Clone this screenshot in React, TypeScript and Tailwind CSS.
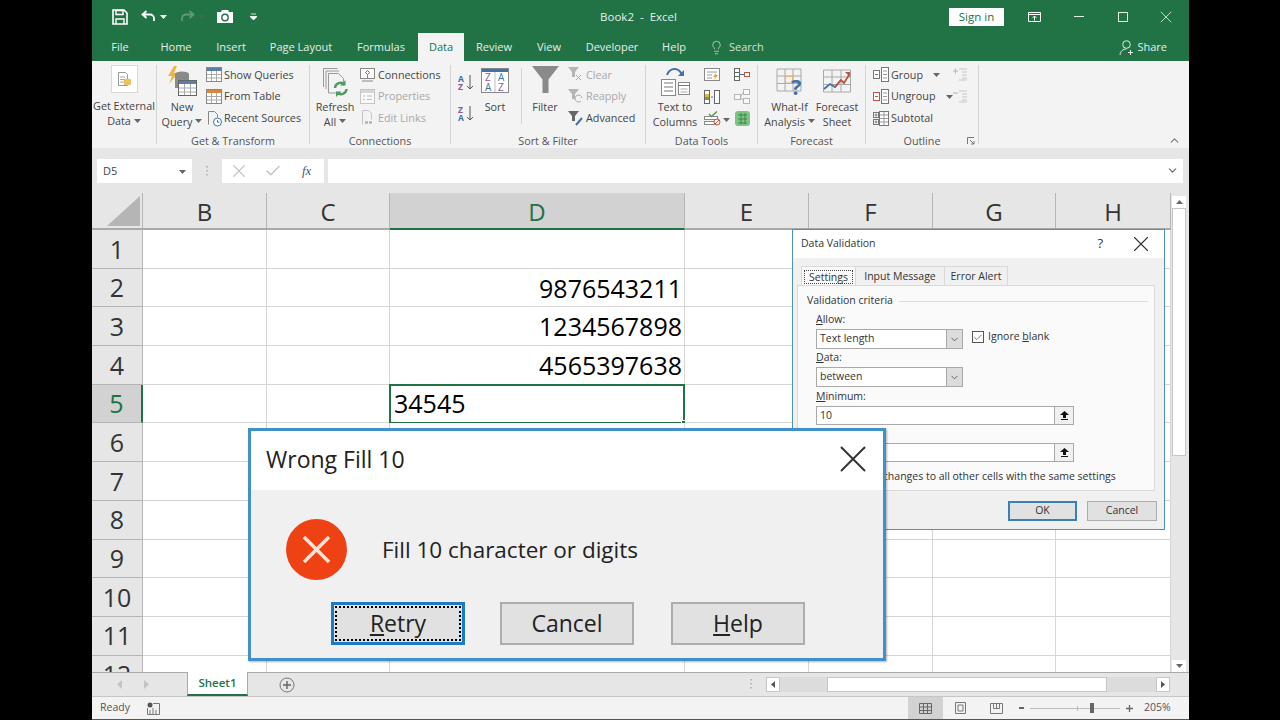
import { Lightbulb, Check, ChevronDown, ChevronUp, X } from "lucide-react";
import type { ReactNode } from "react";

const COLS = [
  { w: "w-[124px]", label: "B" },
  { w: "w-[123px]", label: "C" },
  { w: "w-[295px]", label: "D" },
  { w: "w-[124px]", label: "E" },
  { w: "w-[124px]", label: "F" },
  { w: "w-[123px]", label: "G" },
  { w: "w-[115px]", label: "H" },
];

const VALUES: Record<number, string> = { 2: "9876543211", 3: "1234567898", 4: "4565397638" };
const ROWS = [1, 2, 3, 4, 5, 6, 7, 8, 9, 10, 11, 12];

function Caret({ className = "" }: { className?: string }) {
  return (
    <svg width="7" height="4" viewBox="0 0 7 4" className={className}>
      <path d="M0 0h7L3.5 4z" fill="#666" />
    </svg>
  );
}

function GridIcon({ header = "#5b7fa6" }: { header?: string }) {
  return (
    <svg width="16" height="15" viewBox="0 0 16 15">
      <rect x=".5" y=".5" width="15" height="14" fill="#fff" stroke="#888" />
      <rect x="1" y="1" width="14" height="3" fill={header} />
      <path d="M1 7.5h14M1 11h14M5.5 4v10M10.5 4v10" stroke="#aaa" />
    </svg>
  );
}

function RecentIcon() {
  return (
    <svg width="17" height="17" viewBox="0 0 17 17">
      <path d="M2.5 14.5V1.5h6l3 3v3" fill="none" stroke="#888" />
      <circle cx="11.5" cy="12" r="4" fill="#fff" stroke="#3f72a8" />
      <path d="M11.5 10v2.2h2" fill="none" stroke="#3f72a8" />
    </svg>
  );
}

function ConnIcon() {
  return (
    <svg width="15" height="14" viewBox="0 0 15 14">
      <rect x=".5" y=".5" width="14" height="10" fill="#fff" stroke="#888" />
      <path d="M7.5 2.5l2 2-2 2-2-2z" fill="none" stroke="#3f72a8" />
      <path d="M4 10.5h7M7.5 6.5v4M2 13h11" stroke="#888" />
    </svg>
  );
}

function PropsIcon() {
  return (
    <svg width="15" height="15" viewBox="0 0 15 15" className="opacity-50">
      <rect x=".5" y=".5" width="14" height="14" fill="#fff" stroke="#999" />
      <rect x="1" y="1" width="13" height="3" fill="#bbb" />
      <path d="M3 7h2M3 10.5h2M7 7h5M7 10.5h5" stroke="#888" />
    </svg>
  );
}

function LinksIcon() {
  return (
    <svg width="15" height="16" viewBox="0 0 15 16" className="opacity-50">
      <path d="M2.5 14.5V.5h6l3 3v6" fill="none" stroke="#999" />
      <path d="M5 12.5h3M9 12.5h3" stroke="#777" strokeWidth="2.4" />
    </svg>
  );
}

function SortSmall({ top, bottom }: { top: string; bottom: string }) {
  return (
    <svg width="17" height="17" viewBox="0 0 17 17" fontSize="8.5" fontWeight="700" fontFamily="Open Sans, sans-serif">
      <text x="0" y="8" fill={top === "A" ? "#3f72a8" : "#8a5a9e"}>{top}</text>
      <text x="0" y="16" fill={bottom === "A" ? "#3f72a8" : "#8a5a9e"}>{bottom}</text>
      <path d="M12 1v14M9 12l3 3 3-3" fill="none" stroke="#555" />
    </svg>
  );
}

function SortBig() {
  return (
    <svg width="28" height="25" viewBox="0 0 28 25" fontSize="10" fontFamily="Open Sans, sans-serif" className="mb-[4px]">
      <rect x=".5" y=".5" width="27" height="24" fill="#fff" stroke="#888" />
      <rect x="1" y="1" width="26" height="3" fill="#3f72a8" />
      <path d="M14 4v20" stroke="#bbb" />
      <text x="4" y="13" fill="#8a5a9e">Z</text>
      <text x="4" y="23" fill="#3f72a8">A</text>
      <text x="17" y="13" fill="#3f72a8">A</text>
      <text x="17" y="23" fill="#8a5a9e">Z</text>
    </svg>
  );
}

function Funnel({ muted, kind }: { muted?: boolean; kind?: "x" | "r" | "p" }) {
  const fill = muted ? "#b5b5b5" : "#666";
  return (
    <svg width="16" height="15" viewBox="0 0 16 15">
      <path d="M0 0h11L7 5v5H4V5z" fill={fill} />
      {kind === "x" && <path d="M8 8l5 5M13 8l-5 5" stroke="#a8a8a8" />}
      {kind === "r" && <path d="M14 9a3.500 3.500 0 1 0-1 3" fill="none" stroke="#a8a8a8" />}
      {kind === "p" && <path d="M8 14l6-7" stroke="#3f72a8" strokeWidth="2" />}
    </svg>
  );
}

function DataIcon({ kind }: { kind: number }) {
  if (kind === 0)
    return (
      <svg width="16" height="13" viewBox="0 0 16 13">
        <rect x=".5" y=".5" width="15" height="12" fill="#fff" stroke="#888" />
        <path d="M3 4h10M3 7h5M3 10h5" stroke="#999" />
        <path d="M12 5L9 9h2l-1 3 4-5h-2z" fill="#e9a52f" />
      </svg>
    );
  if (kind === 1)
    return (
      <svg width="16" height="14" viewBox="0 0 16 14">
        <rect x=".5" y=".5" width="5" height="13" fill="#fff" stroke="#666" />
        <rect x="10.500" y=".5" width="5" height="13" fill="#fff" stroke="#666" />
        <rect x="1" y="4" width="4" height="3" fill="#e9b23a" />
        <rect x="1" y="7" width="4" height="3" fill="#6b9f5e" />
        <path d="M7 7h2" stroke="#3f72a8" />
      </svg>
    );
  if (kind === 2)
    return (
      <svg width="17" height="15" viewBox="0 0 17 15">
        <rect x=".5" y="5.500" width="13" height="3" fill="#fff" stroke="#888" />
        <rect x=".5" y="10.500" width="13" height="3" fill="#fff" stroke="#888" />
        <path d="M5 3l2.500 2.500L13 .5" fill="none" stroke="#5c9a4e" strokeWidth="1.500" />
        <circle cx="13" cy="11" r="3" fill="#fff" stroke="#c2543f" />
        <path d="M11 13l4-4" stroke="#c2543f" />
      </svg>
    );
  if (kind === 3)
    return (
      <svg width="16" height="13" viewBox="0 0 16 13">
        <rect x=".5" y=".5" width="5" height="12" fill="#fff" stroke="#666" />
        <path d="M1 4.500h4M1 8.500h4" stroke="#666" />
        <path d="M6 6.500h4" stroke="#3f72a8" />
        <rect x="10.500" y="4.500" width="5" height="4" fill="#fff" stroke="#c2543f" />
      </svg>
    );
  if (kind === 4)
    return (
      <svg width="16" height="15" viewBox="0 0 16 15" className="opacity-50">
        <rect x=".5" y="5.500" width="6" height="5" fill="#fff" stroke="#777" />
        <rect x="9.500" y=".5" width="6" height="5" fill="#fff" stroke="#777" />
        <rect x="9.500" y="9.500" width="6" height="5" fill="#fff" stroke="#777" />
        <path d="M6.500 8l3-5M6.500 8l3 4" stroke="#777" />
      </svg>
    );
  return (
    <svg width="15" height="15" viewBox="0 0 15 15">
      <rect width="15" height="15" rx="3" fill="#7cc47f" />
      <path d="M3 4h9M3 8h9M3 12h9M6 2v11M10 2v11" stroke="#2e7d45" strokeWidth=".8" />
    </svg>
  );
}

function OutlineIcon({ kind }: { kind: "group" | "ungroup" }) {
  const box = kind === "ungroup" ? "#c2543f" : "#777";
  return (
    <svg width="16" height="15" viewBox="0 0 16 15">
      <rect x=".5" y="3.500" width="6" height="8" fill="#fff" stroke={box} />
      <rect x="8.500" y=".5" width="7" height="14" fill="#fff" stroke="#777" />
      <path d="M10 4h4M10 7.500h4M10 11h4" stroke="#999" />
      <path d="M2 7.500h3" stroke={box} />
    </svg>
  );
}

function SubtotalIcon() {
  return (
    <svg width="16" height="15" viewBox="0 0 16 15">
      <rect x=".5" y="1.500" width="5" height="5" fill="#fff" stroke="#777" />
      <rect x=".5" y="8.500" width="5" height="5" fill="#fff" stroke="#777" />
      <path d="M1.500 4h3M3 2.500v3M1.500 11h3M3 9.500v3" stroke="#777" />
      <rect x="6.500" y=".5" width="9" height="14" fill="#fff" stroke="#777" />
      <path d="M7 4h8M7 7.500h8M7 11h8M11 1v13" stroke="#999" />
    </svg>
  );
}

function DetailIcon({ plus }: { plus?: boolean }) {
  return (
    <svg width="14" height="13" viewBox="0 0 14 13" className="opacity-50">
      <path d="M6 1h8M9 4h5M9 7h5M9 10h5M6 12h8" stroke="#999" />
      <path d={plus ? "M0 3h5M2.500 .5v5" : "M0 3h5"} stroke="#777" />
    </svg>
  );
}

function SmallBtn({ icon, label, muted }: { icon: ReactNode; label: ReactNode; muted?: boolean }) {
  return (
    <div className={`flex h-[21.700px] items-center ${muted ? "text-[#a8a8a8]" : ""}`}>
      <span className="flex w-[18px] shrink-0 items-center">{icon}</span>
      <span className="whitespace-nowrap">{label}</span>
    </div>
  );
}

function BigBtn({ icon, lines, caret, w }: { icon: ReactNode; lines: string[]; caret?: boolean; w: string }) {
  return (
    <div className={`flex ${w} shrink-0 flex-col items-center`}>
      <div className="flex h-[33px] items-end justify-center">{icon}</div>
      <div className="mt-[1.500px] flex flex-col items-center leading-[15px]">
        {lines.map((l, i) => (
          <span key={l} className="flex items-center gap-[3px] whitespace-nowrap">
            {l}
            {caret && i === lines.length - 1 && <Caret />}
          </span>
        ))}
      </div>
    </div>
  );
}

function Group({ w, label, children, launcher }: { w: string; label: string; children: ReactNode; launcher?: boolean }) {
  return (
    <div className={`relative my-[4px] flex ${w} shrink-0 flex-col border-r border-[#d4d4d4]`}>
      <div className="-mt-px flex h-[70px] shrink-0">{children}</div>
      <div className="shrink-0 text-center leading-[14px] text-[#555]">{label}</div>
      {launcher && (
        <svg width="8" height="8" viewBox="0 0 8 8" className="absolute bottom-[-1px] right-[3px]">
          <path d="M.5 7V.5H7M3 3l4 4M4 7h3V4" fill="none" stroke="#777" />
        </svg>
      )}
    </div>
  );
}

function TitleBar() {
  return (
    <div className="grid h-[33px] grid-cols-[1fr_auto_1fr] items-center bg-[#217346] text-[11.500px] text-[#e4efe8]">
      <div className="flex items-center pl-[20px]">
        <svg width="16" height="16" viewBox="0 0 16 16" className="mr-[13px]">
          <path d="M1 1h11l3 3v11H1z" fill="none" stroke="#fff" strokeWidth="1.600" />
          <path d="M4 1.500h7v4H4zM4 15v-5h8v5" fill="none" stroke="#fff" strokeWidth="1.400" />
        </svg>
        <svg width="15" height="13" viewBox="0 0 15 13" className="mr-[4px]">
          <path d="M5.500 1L1.500 4.500l4 3.500M2 4.500h7a4 4 0 0 1 4 4V11" fill="none" stroke="#fff" strokeWidth="1.800" />
        </svg>
        <Caret className="mr-[13px] brightness-[3]" />
        <svg width="15" height="13" viewBox="0 0 15 13" className="mr-[3px] opacity-40">
          <path d="M9.500 1l4 3.500-4 3.500M13 4.500H6a4 4 0 0 0-4 4V11" fill="none" stroke="#bcd8c8" strokeWidth="1.800" />
        </svg>
        <Caret className="mr-[12px] opacity-40" />
        <svg width="16" height="13" viewBox="0 0 16 13" className="mr-[17px]">
          <path d="M0 2h4l1-2h6l1 2h4v11H0z" fill="#fff" />
          <circle cx="8" cy="7.500" r="3.200" fill="none" stroke="#217346" strokeWidth="1.400" />
        </svg>
        <svg width="7" height="7" viewBox="0 0 7 7">
          <path d="M1 1h5M0 3.500h7L3.500 7z" stroke="#fff" fill="#fff" strokeWidth=".8" />
        </svg>
      </div>
      <div className="-translate-x-[2px]">Book2&nbsp; -&nbsp; Excel</div>
      <div className="flex items-center justify-end">
        <div className="flex h-[18px] w-[55px] items-center justify-center bg-white text-[#217346]">Sign in</div>
        <svg width="13" height="10" viewBox="0 0 13 10" className="ml-[24px]">
          <path d="M.5.500h12v9H.5zM.5 2.500h12M6.500 8.500V4M4.500 6l2-2 2 2" fill="none" stroke="#fff" />
        </svg>
        <div className="ml-[33px] h-px w-[10px] bg-[#e4efe8]" />
        <div className="ml-[34px] h-[10px] w-[10px] border border-[#e4efe8]" />
        <X size={20} strokeWidth={1} className="ml-[28px] mr-[13px] text-[#e4efe8]" />
      </div>
    </div>
  );
}

function TabBar() {
  const tabs = [
    { label: "File", w: "w-[56px]" },
    { label: "Home", w: "w-[56px]" },
    { label: "Insert", w: "w-[54px]" },
    { label: "Page Layout", w: "w-[86px]" },
    { label: "Formulas", w: "w-[74px]" },
    { label: "Data", w: "w-[46px]", active: true },
    { label: "Review", w: "w-[60px]" },
    { label: "View", w: "w-[50px]" },
    { label: "Developer", w: "w-[76px]" },
    { label: "Help", w: "w-[48px]" },
  ];
  return (
    <div className="flex h-[28px] items-stretch bg-[#217346] text-[11px] text-[#e4efe8]">
      {tabs.map((t) => (
        <div
          key={t.label}
          className={`flex ${t.w} items-center justify-center ${t.active ? "bg-[#f3f3f3] text-[#217346]" : ""}`}
        >
          {t.label}
        </div>
      ))}
      <div className="ml-[11px] flex items-center gap-[5px] text-[#cfe2d7]">
        <Lightbulb size={15} strokeWidth={1.200} />
        Search
      </div>
      <div className="ml-auto mr-[22px] flex items-center gap-[3px]">
        <svg width="15" height="15" viewBox="0 0 15 15">
          <circle cx="7.500" cy="4.500" r="3.800" fill="none" stroke="#e4efe8" />
          <path d="M1 15c.5-4 3-6 6.500-6M9 12.500h5M11.500 10v5" fill="none" stroke="#e4efe8" />
        </svg>
        Share
      </div>
    </div>
  );
}

function Ribbon() {
  return (
    <div className="relative flex h-[87px] bg-[#f3f3f3] text-[10.800px] text-[#444]">
      <Group w="w-[65px]" label="">
        <div className="flex w-full flex-col items-center">
          <div className="mt-px flex h-[28px] w-[27px] items-center justify-center border border-[#d8d8d8] bg-white">
            <svg width="15" height="15" viewBox="0 0 15 15">
              <path d="M1.500.5h7l2 2v11h-9z" fill="#fff" stroke="#999" />
              <path d="M3 5h5M3 7.500h5M3 10h4" stroke="#aaa" />
              <ellipse cx="10.500" cy="8" rx="3.500" ry="1.500" fill="#efc15c" />
              <rect x="7" y="8" width="7" height="5" fill="#efc15c" />
            </svg>
          </div>
          <div className="mt-[5px] flex flex-col items-center leading-[15px]">
            <span className="whitespace-nowrap">Get External</span>
            <span className="flex items-center gap-[3px]">
              Data <Caret />
            </span>
          </div>
        </div>
      </Group>

      <Group w="w-[153px]" label="Get & Transform">
        <BigBtn
          w="w-[50px]"
          caret
          lines={["New", "Query"]}
          icon={
            <svg width="32" height="31" viewBox="0 0 32 31">
              <path d="M8 0L2 10h4L3 18l9-11H8l3-7z" fill="#eeb544" />
              <ellipse cx="16" cy="8" rx="7" ry="2.500" fill="#8a8a8a" />
              <rect x="9" y="8" width="14" height="14" fill="#8a8a8a" />
              <rect x="12.500" y="14.500" width="18" height="15" fill="#fff" stroke="#666" />
              <rect x="13" y="15" width="17" height="3" fill="#5b7fa6" />
              <path d="M13 22h17M13 26h17M18.500 18v11M24.500 18v11" stroke="#aaa" />
            </svg>
          }
        />
        <div className="ml-[-1px] flex flex-col">
          <SmallBtn icon={<GridIcon />} label="Show Queries" />
          <SmallBtn icon={<GridIcon header="#d7893b" />} label="From Table" />
          <SmallBtn icon={<RecentIcon />} label="Recent Sources" />
        </div>
      </Group>

      <Group w="w-[141px]" label="Connections">
        <BigBtn
          w="w-[50px]"
          caret
          lines={["Refresh", "All"]}
          icon={
            <svg width="26" height="30" viewBox="0 0 26 30">
              <path d="M1.500 20V1.500h14M4 22V4h13M6.500 26V6.500h10l5 5V15M6.500 26h8" fill="none" stroke="#999" />
              <path d="M13 21a5.500 5.500 0 0 1 9.500-3.500M24.500 22a5.500 5.500 0 0 1-9.500 3.500" fill="none" stroke="#4f9a63" strokeWidth="2.400" />
              <path d="M23.500 13v5.500H18M14 30v-5.500h5.500" fill="#4f9a63" />
            </svg>
          }
        />
        <div className="flex flex-col">
          <SmallBtn icon={<ConnIcon />} label="Connections" />
          <SmallBtn muted icon={<PropsIcon />} label="Properties" />
          <SmallBtn muted icon={<LinksIcon />} label="Edit Links" />
        </div>
      </Group>

      <Group w="w-[195px]" label="Sort & Filter">
        <div className="ml-[7px] flex flex-col pt-[2px]">
          <div className="flex h-[33px] items-center">
            <SortSmall top="A" bottom="Z" />
          </div>
          <div className="flex h-[28px] items-center">
            <SortSmall top="Z" bottom="A" />
          </div>
        </div>
        <BigBtn w="w-[40px]" lines={["Sort"]} icon={<SortBig />} />
        <div className="ml-[6px] mt-[4px] h-[56px] border-l border-[#d4d4d4]" />
        <BigBtn
          w="w-[46px]"
          lines={["Filter"]}
          icon={
            <svg width="27" height="27" viewBox="0 0 27 27" className="mb-[4px]">
              <path d="M0 0h27L16.500 13.500V27h-6V13.500z" fill="#8a8a8a" />
            </svg>
          }
        />
        <div className="flex flex-col">
          <SmallBtn muted icon={<Funnel muted kind="x" />} label="Clear" />
          <SmallBtn muted icon={<Funnel muted kind="r" />} label="Reapply" />
          <SmallBtn icon={<Funnel kind="p" />} label="Advanced" />
        </div>
      </Group>

      <Group w="w-[112px]" label="Data Tools">
        <BigBtn
          w="w-[58px]"
          lines={["Text to", "Columns"]}
          icon={
            <svg width="29" height="29" viewBox="0 0 29 29" className="mb-[1px]">
              <path d="M6 8c3-8 12-8 15 0" fill="none" stroke="#3f72a8" strokeWidth="2" />
              <path d="M23 3v6h-6z" fill="#3f72a8" />
              <rect x=".5" y="12.500" width="14" height="16" fill="#fff" stroke="#888" />
              <path d="M3 16h9M3 20h9M3 24h9" stroke="#777" />
              <rect x="17.500" y="15.500" width="11" height="12" fill="#fff" stroke="#888" />
              <path d="M17 18.500h11" stroke="#777" />
              <path d="M19.500 22h7M19.500 25h7" stroke="#aaa" />
            </svg>
          }
        />
        <div className="flex w-[16px] flex-col items-center">
          <div className="flex h-[21.700px] items-center"><DataIcon kind={0} /></div>
          <div className="flex h-[21.700px] items-center"><DataIcon kind={1} /></div>
          <div className="flex h-[21.700px] items-center"><DataIcon kind={2} /></div>
        </div>
        <div className="ml-[3px] flex h-[65px] items-end pb-[7px]">
          <Caret />
        </div>
        <div className="ml-[4px] flex flex-col items-center">
          <div className="flex h-[21.700px] items-center"><DataIcon kind={3} /></div>
          <div className="flex h-[21.700px] items-center"><DataIcon kind={4} /></div>
          <div className="flex h-[21.700px] items-center"><DataIcon kind={5} /></div>
        </div>
      </Group>

      <Group w="w-[108px]" label="Forecast">
        <BigBtn
          w="w-[63px]"
          caret
          lines={["What-If", "Analysis"]}
          icon={
            <svg width="28" height="29" viewBox="0 0 28 29" className="overflow-visible">
              <path d="M1 1h24v22H1zM1 8h24M1 15.500h24M9 1v22M17 1v22" fill="none" stroke="#a8a8a8" />
              <rect x="9.500" y="8.500" width="7" height="6.500" fill="none" stroke="#e6b478" />
              <text x="15" y="27" fontSize="22" fontWeight="700" fill="#3f72a8" fontFamily="Open Sans, sans-serif">?</text>
            </svg>
          }
        />
        <BigBtn
          w="w-[32px]"
          lines={["Forecast", "Sheet"]}
          icon={
            <svg width="28" height="26" viewBox="0 0 28 26" className="mb-[2px]">
              <path d="M.5 1h27v22H.5zM.5 8h27M.5 15.500h27M9 1v22M18 1v22" fill="none" stroke="#a8a8a8" />
              <path d="M1 20l6-5 5 3 6-7" fill="none" stroke="#3f72a8" strokeWidth="1.800" />
              <path d="M12 18l6-7 3 3 5-8" fill="none" stroke="#c2543f" strokeWidth="1.800" />
              <path d="M22 3h5v5z" fill="#c2543f" />
            </svg>
          }
        />
      </Group>

      <Group w="w-[113px]" label="Outline" launcher>
        <div className="ml-[7px] flex flex-col">
          <SmallBtn icon={<OutlineIcon kind="group" />} label={<span className="flex items-center gap-[10px]">Group <Caret /></span>} />
          <SmallBtn icon={<OutlineIcon kind="ungroup" />} label={<span className="flex items-center gap-[10px]">Ungroup <Caret /></span>} />
          <SmallBtn icon={<SubtotalIcon />} label="Subtotal" />
        </div>
        <div className="ml-auto mr-[11px] flex flex-col">
          <div className="flex h-[21.700px] items-center"><DetailIcon plus /></div>
          <div className="flex h-[21.700px] items-center"><DetailIcon /></div>
        </div>
      </Group>

      <ChevronUp size={13} strokeWidth={2} className="absolute bottom-[1px] right-[8px] text-[#777]" />
    </div>
  );
}

function FormulaBar() {
  return (
    <div className="flex h-[45px] items-start bg-[#e6e6e6] pl-[5px] pr-[6px] pt-[10.500px] text-[11px] text-[#444]">
      <div className="flex h-[24px] w-[95px] items-center justify-between bg-white pl-[6px] pr-[6px] pt-[2px]">
        D5 <Caret />
      </div>
      <svg width="4" height="12" viewBox="0 0 4 12" className="ml-[13px] mt-[6px]">
        <path d="M2 1v1.500M2 5v1.500M2 9v1.500" stroke="#aaa" strokeWidth="1.500" />
      </svg>
      <div className="ml-[13px] flex h-[24px] w-[102px] items-center bg-white pl-[6px] text-[#c4c4c4]">
        <X size={22} strokeWidth={1.200} />
        <Check size={18} strokeWidth={2} className="ml-[14px]" />
        <span className="ml-[20px] font-['Liberation_Serif',serif] text-[13px] italic text-[#555]">fx</span>
      </div>
      <div className="ml-[4px] flex h-[24px] flex-1 items-center justify-end bg-white pr-[4px]">
        <ChevronDown size={13} strokeWidth={2} className="text-[#666]" />
      </div>
    </div>
  );
}

function Sheet() {
  return (
    <div className="relative flex h-[479px] bg-[#e6e6e6]">
      <div className="h-full w-[1079px] overflow-hidden">
        <div className="flex h-[37px] border-b-2 border-[#a9a9a9] text-[24px] text-[#333]">
          <div className="flex w-[51px] items-end justify-end border-r border-[#b5b5b5] pb-[2px] pr-[2px]">
            <svg width="33" height="30" viewBox="0 0 33 30">
              <path d="M33 0v30H0z" fill="#b5b5b5" />
            </svg>
          </div>
          {COLS.map((c) => (
            <div
              key={c.label}
              className={`flex ${c.w} items-center justify-center border-r border-[#b5b5b5] pt-[2px] ${
                c.label === "D" ? "-mb-[2px] border-b-2 border-b-[#217346] bg-[#d2d2d2] text-[#217346]" : ""
              }`}
            >
              {c.label}
            </div>
          ))}
        </div>
        {ROWS.map((r) => (
          <div key={r} className="flex h-[38.700px]">
            <div
              className={`flex w-[51px] shrink-0 items-center justify-center border-b border-r border-[#b5b5b5] pt-[1px] text-[25px] ${
                r === 5 ? "border-r-2 border-r-[#217346] bg-[#d2d2d2] text-[#217346]" : "text-[#333]"
              }`}
            >
              {r}
            </div>
            {COLS.map((c) => (
              <div
                key={c.label}
                className={`relative flex ${c.w} shrink-0 items-center justify-end border-b border-r border-[#d6d6d6] bg-white pr-[2px] pt-[2px] text-[25px] text-black`}
              >
                {c.label === "D" && VALUES[r]}
                {c.label === "D" && r === 5 && (
                  <div className="absolute -left-px -top-px flex h-[40px] w-[296px] items-center border-2 border-[#217346] pl-[3px]">
                    34545
                    <div className="absolute -bottom-[3px] -right-[3px] h-[5px] w-[5px] border border-white bg-[#217346]" />
                  </div>
                )}
              </div>
            ))}
          </div>
        ))}
      </div>
      <VerticalScroll />
      <DataValidation />
      <WrongFill />
    </div>
  );
}

function VerticalScroll() {
  return (
    <div className="ml-px flex h-full w-[14px] flex-col pt-[3px]">
      <div className="flex h-[12px] items-center justify-center bg-white">
        <svg width="7" height="4" viewBox="0 0 7 4"><path d="M3.500 0L7 4H0z" fill="#666" /></svg>
      </div>
      <div className="h-[248px] border border-[#c6c6c6] bg-white" />
      <div className="flex-1" />
      <div className="flex h-[12px] items-center justify-center bg-white">
        <Caret />
      </div>
    </div>
  );
}

function Dropdown({ value }: { value: string }) {
  return (
    <div className="flex h-[20px] w-[147px] items-center justify-between border border-[#a9a9a9] bg-white pl-[3px]">
      {value}
      <span className="flex h-full w-[16px] items-center justify-center border-l border-[#a9a9a9] bg-[#dcdcdc]">
        <ChevronDown size={11} className="text-[#555]" />
      </span>
    </div>
  );
}

function RefInput({ value }: { value?: string }) {
  return (
    <div className="flex h-[19px] w-[258px] items-center border border-[#a9a9a9] bg-white pl-[3px]">
      {value}
      <span className="ml-auto flex h-full w-[19px] items-center justify-center border-l border-[#a9a9a9] bg-[#f0f0f0]">
        <svg width="9" height="9" viewBox="0 0 9 9"><path d="M4.500 0L9 4H6v3H3V4H0zM1 8h7v1H1z" fill="#111" /></svg>
      </span>
    </div>
  );
}

function DataValidation() {
  return (
    <div className="absolute left-[700px] top-[36px] flex h-[301px] w-[373px] flex-col border border-[#4b91c4] bg-[#f0f0f0] text-[10.500px] text-[#333]">
      <div className="flex h-[28px] items-center justify-between bg-white pl-[8px] pr-[10px]">
        Data Validation
        <div className="flex items-center gap-[25px]">
          <span className="text-[13px]">?</span>
          <X size={26} strokeWidth={1} />
        </div>
      </div>
      <div className="ml-[8px] mt-[8px] flex h-[19px] items-stretch">
        <div className="flex w-[55px] items-center justify-center border border-b-0 border-[#d9d9d9] bg-[#fafafa] pt-[1px]">
          <span className="border border-dotted border-[#444] px-[4px] leading-[12px]">Settings</span>
        </div>
        <div className="flex w-[89px] items-center justify-center border-r border-t border-[#d9d9d9] pt-[2px]">Input Message</div>
        <div className="flex w-[63px] items-center justify-center border-r border-t border-[#d9d9d9] pt-[2px]">Error Alert</div>
      </div>
      <div className="ml-[4px] mr-[9px] flex h-[206px] flex-col border border-[#d9d9d9] bg-[#fafafa] pl-[9px] pt-[8px]">
        <div className="flex h-[14px] items-center gap-[6px] pr-[6px]">
          Validation criteria <div className="h-px flex-1 bg-[#dcdcdc]" />
        </div>
        <div className="ml-[9px] flex flex-col">
          <div className="mt-[4px] h-[14px] leading-[14px]"><u>A</u>llow:</div>
          <div className="mt-[3px] flex items-center gap-[9px]">
            <Dropdown value="Text length" />
            <div className="-mt-[4px] flex items-center gap-[4px]">
              <span className="flex h-[12px] w-[12px] items-center justify-center border border-[#555] bg-white">
                <Check size={11} strokeWidth={1.500} />
              </span>
              <span>Ignore <u>b</u>lank</span>
            </div>
          </div>
          <div className="mt-[1px] h-[14px] leading-[14px]"><u>D</u>ata:</div>
          <div className="mt-[3px]"><Dropdown value="between" /></div>
          <div className="mt-[2px] h-[14px] leading-[14px]"><u>M</u>inimum:</div>
          <div className="mt-[3px]"><RefInput value="10" /></div>
          <div className="mt-[1px] h-[14px] leading-[14px]">Ma<u>x</u>imum:</div>
          <div className="mt-[3px]"><RefInput /></div>
          <div className="ml-[7px] mt-[7px] h-[14px] whitespace-nowrap leading-[14px]">
            Apply these changes to all other cells with the same settings
          </div>
        </div>
      </div>
      <div className="mt-[10px] flex justify-end gap-[10px] pr-[7px]">
        <div className="flex h-[20px] w-[69px] items-center justify-center border-2 border-[#3b7fb8] bg-[#e1e1e1]">OK</div>
        <div className="flex h-[20px] w-[70px] items-center justify-center border border-[#adadad] bg-[#e1e1e1]">Cancel</div>
      </div>
    </div>
  );
}

function BoxButton({ children, focused, className = "" }: { children: ReactNode; focused?: boolean; className?: string }) {
  if (focused)
    return (
      <div className={`flex h-[43px] w-[134px] items-center justify-center border-[3px] border-[#1f7ac4] bg-[#e1e1e1] p-px ${className}`}>
        <div className="flex h-full w-full items-center justify-center border-2 border-dotted border-black">{children}</div>
      </div>
    );
  return (
    <div className={`flex h-[43px] w-[134px] items-center justify-center border-2 border-[#adadad] bg-[#e1e1e1] ${className}`}>{children}</div>
  );
}

function WrongFill() {
  return (
    <div className="absolute left-[156px] top-[235px] flex h-[233px] w-[638px] flex-col border-[3px] border-[#4290c9] bg-[#f0f0f0] text-[#222] shadow-[1px_1px_2px_rgba(0,0,0,0.3)]">
      <div className="flex h-[59px] shrink-0 items-center justify-between bg-white pb-[3px] pl-[15px] pr-[7px] text-[23px]">
        Wrong Fill 10
        <X size={46} strokeWidth={1} className="text-[#333]" />
      </div>
      <div className="ml-[35px] mt-[29px] flex items-center">
        <svg width="61" height="61" viewBox="0 0 61 61">
          <circle cx="30.500" cy="30.500" r="30.500" fill="#ee4215" />
          <path d="M18 18l25 25M43 18L18 43" stroke="#fbe3dc" strokeWidth="3.500" />
        </svg>
        <span className="ml-[35px] text-[22.500px]">Fill 10 character or digits</span>
      </div>
      <div className="ml-[80px] mt-[22px] flex text-[23px]">
        <BoxButton focused><span><u>R</u>etry</span></BoxButton>
        <BoxButton className="ml-[35px]">Cancel</BoxButton>
        <BoxButton className="ml-[37px]"><span><u>H</u>elp</span></BoxButton>
      </div>
    </div>
  );
}

function SheetTabs() {
  return (
    <div className="flex h-[24px] items-stretch border-t border-[#a9a9a9] bg-[#e6e6e6] text-[11.500px]">
      <div className="flex w-[95px] items-center justify-end gap-[22px] pr-[38px]">
        <svg width="5" height="9" viewBox="0 0 5 9"><path d="M5 0v9L0 4.500z" fill="#c4c4c4" /></svg>
        <svg width="5" height="9" viewBox="0 0 5 9"><path d="M0 0v9l5-4.500z" fill="#c4c4c4" /></svg>
      </div>
      <div className="-mt-px flex w-[61px] items-center justify-center border-x border-b-2 border-x-[#a9a9a9] border-b-[#217346] bg-white font-semibold text-[#217346]">
        Sheet1
      </div>
      <svg width="16" height="16" viewBox="0 0 16 16" className="ml-[31px] mt-[4px]">
        <circle cx="8" cy="8" r="7" fill="none" stroke="#777" />
        <path d="M8 4v8M4 8h8" stroke="#666" strokeWidth="1.400" />
      </svg>
      <svg width="4" height="12" viewBox="0 0 4 12" className="ml-[454px] mt-[5px]">
        <path d="M2 1v1.500M2 5v1.500M2 9v1.500" stroke="#aaa" strokeWidth="1.500" />
      </svg>
      <div className="ml-[13px] mt-[4px] flex h-[15px] w-[404px] items-stretch">
        <div className="flex w-[14px] items-center justify-center border border-[#c6c6c6] bg-white">
          <svg width="4" height="7" viewBox="0 0 4 7"><path d="M4 0v7L0 3.500z" fill="#555" /></svg>
        </div>
        <div className="w-[47px] bg-[#dcdcdc]" />
        <div className="w-[280px] border border-[#c6c6c6] bg-white" />
        <div className="flex-1 bg-[#dcdcdc]" />
        <div className="flex w-[14px] items-center justify-center border border-[#c6c6c6] bg-white">
          <svg width="4" height="7" viewBox="0 0 4 7"><path d="M0 0v7l4-3.500z" fill="#555" /></svg>
        </div>
      </div>
    </div>
  );
}

function StatusBar() {
  return (
    <div className="flex h-[24px] items-stretch border-b border-t border-b-[#217346] border-t-[#c6c6c6] bg-[#f3f3f3] text-[10.500px] text-[#555]">
      <div className="flex items-center pl-[8px]">Ready</div>
      <svg width="13" height="13" viewBox="0 0 13 13" className="ml-[17px] mt-[5px]">
        <circle cx="3" cy="3" r="2.500" fill="#555" />
        <path d="M6 1.500h6.500v11H.5V6" fill="none" stroke="#777" />
        <path d="M3 8v4M6 6v6M9 8v4" stroke="#777" />
      </svg>
      <div className="ml-[748px] flex w-[35px] items-center justify-center bg-[#d2d2d2]">
        <svg width="13" height="11" viewBox="0 0 13 11"><path d="M.5.500h12v10H.5zM.5 4h12M.5 7.500h12M4.500.5v10M8.500.5v10" fill="none" stroke="#666" /></svg>
      </div>
      <div className="ml-[12px] flex items-center">
        <svg width="11" height="12" viewBox="0 0 11 12"><path d="M.5.500h10v11H.5zM3 3h5v6H3z" fill="none" stroke="#777" /></svg>
      </div>
      <div className="ml-[24px] flex items-center">
        <svg width="13" height="11" viewBox="0 0 13 11"><path d="M.5.500h12v10H.5zM3.500.5v5h6v-5M6.500.5v5" fill="none" stroke="#777" /></svg>
      </div>
      <div className="ml-[16px] flex w-[114px] items-center">
        <span className="h-[2px] w-[5px] bg-[#666]" />
        <div className="relative mx-[6px] h-px flex-1 bg-[#bbb]">
          <span className="absolute left-[47px] top-[-2px] h-[5px] w-px bg-[#bbb]" />
          <span className="absolute left-[60px] top-[-5px] h-[10px] w-[4px] bg-[#666]" />
        </div>
        <svg width="7" height="7" viewBox="0 0 7 7"><path d="M0 3.500h7M3.500 0v7" stroke="#666" strokeWidth="1.300" /></svg>
      </div>
      <div className="ml-[11px] flex items-center">205%</div>
    </div>
  );
}

export default function App() {
  return (
    <div className="h-[720px] w-[1280px] overflow-hidden bg-black font-['Open_Sans','Noto_Sans',sans-serif]">
      <div className="relative ml-[92px] flex h-[720px] w-[1097px] flex-col">
        <TitleBar />
        <TabBar />
        <Ribbon />
        <FormulaBar />
        <Sheet />
        <SheetTabs />
        <StatusBar />
      </div>
    </div>
  );
}
